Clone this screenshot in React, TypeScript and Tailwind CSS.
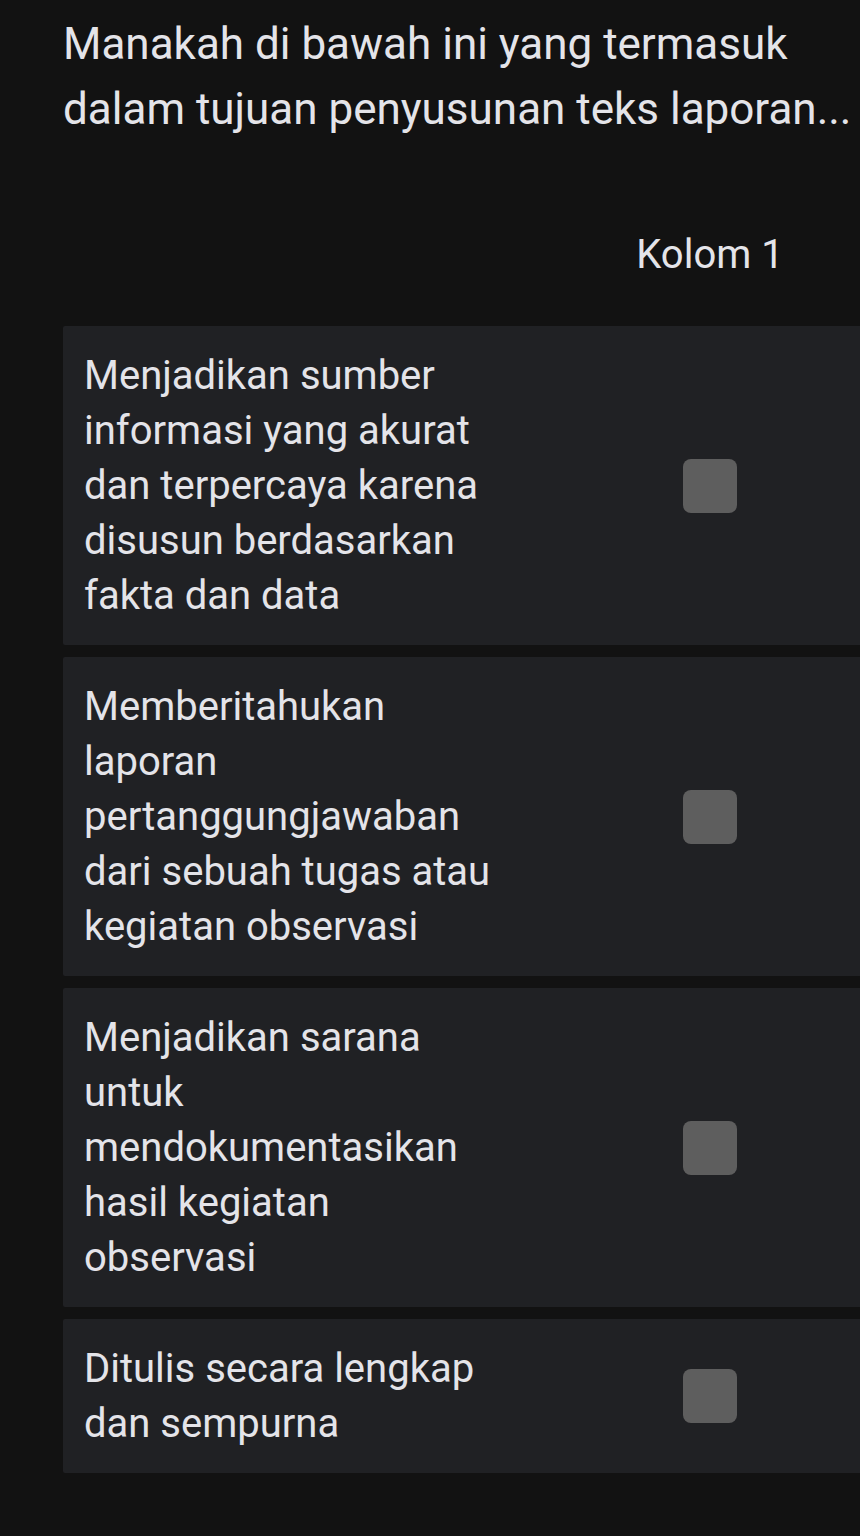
import React from "react";

const rows = [
  "Menjadikan sumber informasi yang akurat dan terpercaya karena disusun berdasarkan fakta dan data",
  "Memberitahukan laporan pertanggungjawaban dari sebuah tugas atau kegiatan observasi",
  "Menjadikan sarana untuk mendokumentasikan hasil kegiatan observasi",
  "Ditulis secara lengkap dan sempurna",
];

export default function App() {
  return (
    <div
      className="min-h-[1536px] w-[860px] overflow-hidden bg-[#121212] text-[#e4e4e9]"
      style={{ fontFamily: "Roboto, 'Noto Sans', sans-serif" }}
    >
      <div className="pl-[63px] pr-[6px] pt-[12px] text-[44px] leading-[65px]">
        Manakah di bawah ini yang termasuk dalam tujuan penyusunan teks laporan...
      </div>
      <div className="ml-[63px] w-[836px] pt-[85px]">
        <div className="flex">
          <div className="w-[458px]" />
          <div className="flex w-[378px] items-center justify-center pb-[43px] text-[40px] leading-[56px]">
            Kolom 1
          </div>
        </div>
        <div className="flex flex-col gap-[12px]">
          {rows.map((r, i) => (
            <div key={i} className="flex rounded-[2px] bg-[#202124]">
              <div className="w-[458px] px-[21px] py-[22px] text-[40px] leading-[55px]">
                {r}
              </div>
              <div className="flex w-[378px] items-center justify-center">
                <div className="h-[54px] w-[54px] rounded-[8px] bg-[#5e5e5e]" />
              </div>
            </div>
          ))}
        </div>
      </div>
    </div>
  );
}
